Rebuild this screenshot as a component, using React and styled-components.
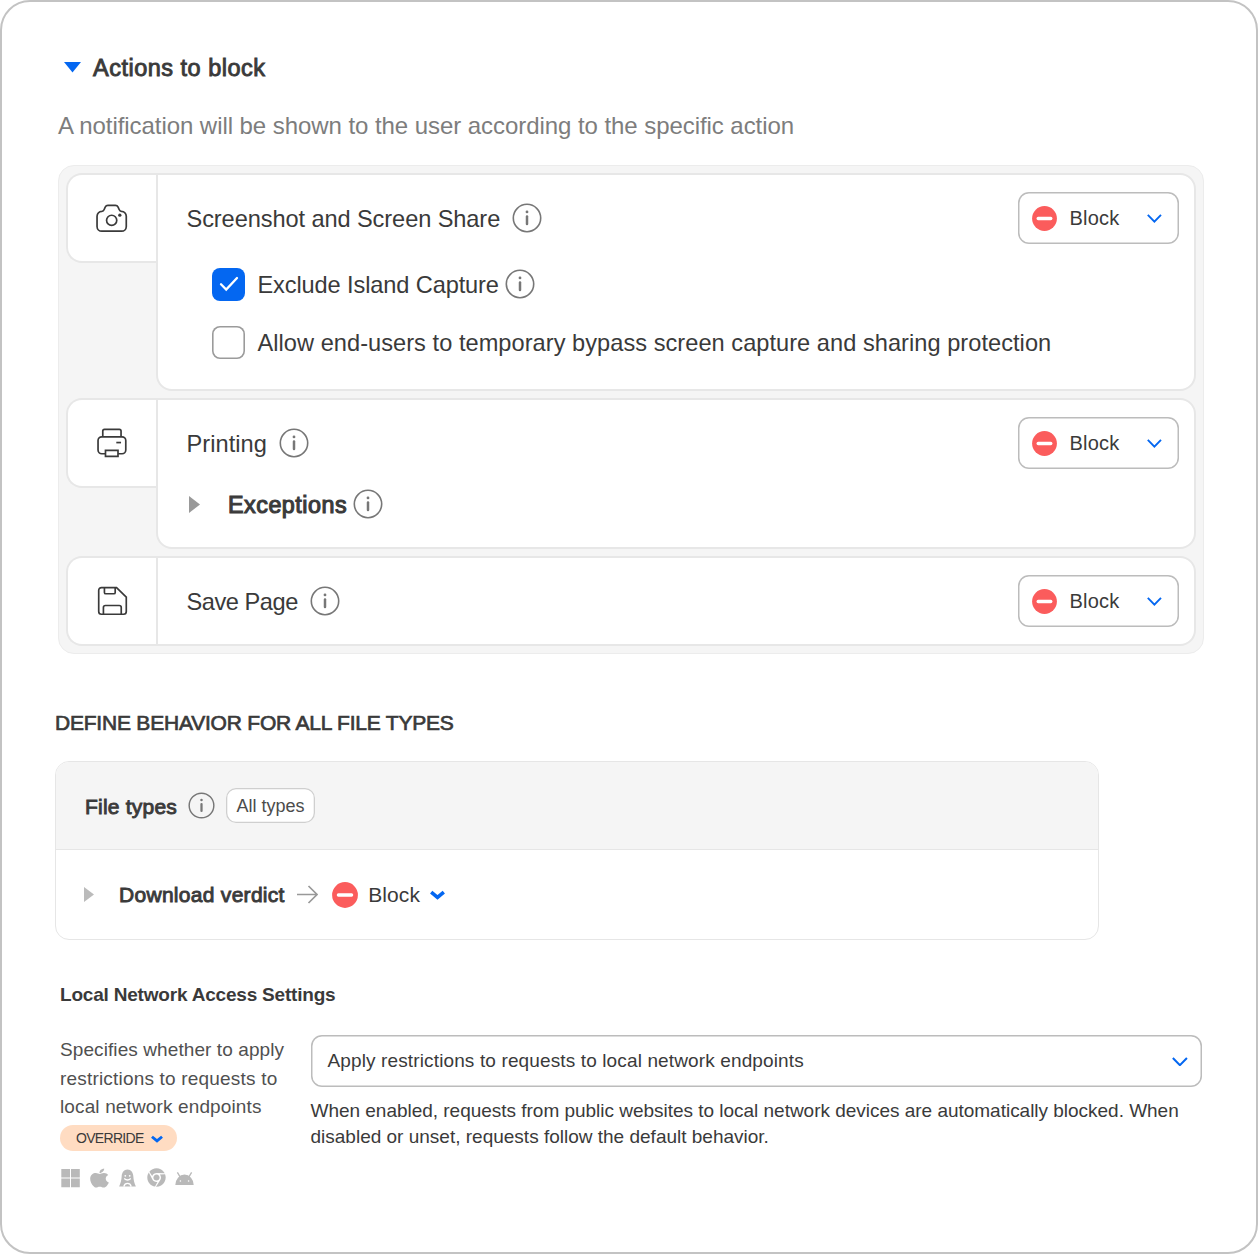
import React from 'react';
import styled, { createGlobalStyle } from 'styled-components';
import { FaApple, FaChrome } from 'react-icons/fa';

const GlobalStyle = createGlobalStyle`
  * {
    box-sizing: border-box;
  }
  body {
    margin: 0;
    background: #ffffff;
    font-family: 'Liberation Sans', Arial, sans-serif;
    color: #3a3a3a;
  }
  svg {
    display: block;
    flex-shrink: 0;
  }
`

const Card = styled.div`
  width: 1258px;
  height: 1254px;
  border: 2px solid #c3c3c3;
  border-radius: 30px;
  padding: 51px 52px 0 53px;
`
const Text = styled.span`
  font-size: ${(p) => p.$size || 23.6}px;
  letter-spacing: ${(p) => p.$track || 0}px;
  -webkit-text-stroke: ${(p) => p.$medium || 0}px currentColor;
  white-space: nowrap;
`
const TitleRow = styled.div`
  display: flex;
  align-items: center;
  height: 30px;
  padding-left: 9px;
  gap: 12px;
`
const Description = styled.div`
  height: 30px;
  line-height: 30px;
  margin-top: 28px;
  padding-left: 3px;
  color: #7d7d7d;
`
const ActionList = styled.div`
  display: flex;
  flex-direction: column;
  gap: 7px;
  width: 1146px;
  margin: 24px 0 0 3px;
  padding: 7px;
  background: #f5f5f5;
  border: 1px solid #ececec;
  border-radius: 16px;
`
const ActionRow = styled.div`
  display: flex;
  align-items: flex-start;
`
const IconCell = styled.div`
  display: flex;
  align-items: center;
  justify-content: center;
  width: 90px;
  height: 90px;
  background: #ffffff;
  border: 2px solid #e7e7e7;
  border-right: none;
  border-radius: 16px 0 0 16px;
`
const ActionBody = styled.div`
  flex: 1;
  height: ${(p) => p.$height}px;
  background: #ffffff;
  border: 2px solid #e7e7e7;
  border-radius: 0 16px 16px ${(p) => (p.$height > 90 ? 16 : 0)}px;
`
const ActionHeader = styled.div`
  display: flex;
  align-items: center;
  height: 86px;
  padding: 0 15px 0 28.5px;
`
const ActionName = styled.div`
  display: flex;
  align-items: center;
  flex: 1;
  gap: 12px;
`
const Label = styled.div`
  padding-top: 2px;
`
const Select = styled.div`
  display: flex;
  align-items: center;
  width: ${(p) => (p.$wide ? '891px' : '161px')};
  height: 52px;
  padding: ${(p) => (p.$wide ? '0 14px 0 17px' : '0 17px 0 14px')};
  border-radius: 11px;
  box-shadow: inset 0 0 0 1.5px #bcbcbc;
  background: #ffffff;
`
const SelectLabel = styled.div`
  flex: 1;
  padding-left: ${(p) => p.$indent || 0}px;
`
const CheckList = styled.div`
  display: flex;
  flex-direction: column;
  gap: 26px;
  padding: 7px 0 0 54px;
`
const CheckRow = styled.div`
  display: flex;
  align-items: center;
  height: 32px;
`
const Checkbox = styled.div`
  display: flex;
  align-items: center;
  justify-content: center;
  width: 33px;
  height: 33px;
  margin-right: 12.5px;
  border-radius: 8px;
  background: ${(p) => (p.$checked ? '#0467f1' : '#ffffff')};
  box-shadow: ${(p) => (p.$checked ? 'none' : 'inset 0 0 0 1.6px #9b9b9b')};
`
const CheckLabel = styled.div`
  display: flex;
  align-items: center;
  gap: 6px;
`
const ExceptionsRow = styled.div`
  display: flex;
  align-items: center;
  height: 30px;
  margin-top: 3px;
  padding-left: 31px;
`
const ExceptionsLabel = styled.div`
  display: flex;
  align-items: center;
  gap: 6px;
  margin-left: 28px;
`
const SectionTitle = styled.div`
  height: 28px;
  line-height: 28px;
  margin-top: 55px;
`
const Panel = styled.div`
  width: 1044px;
  height: 179px;
  margin-top: 24px;
  border: 1px solid #e6e6e6;
  border-radius: 14px;
  overflow: hidden;
`
const PanelHeader = styled.div`
  display: flex;
  align-items: center;
  height: 88px;
  padding-left: 29px;
  background: #f5f5f5;
  border-bottom: 1px solid #e6e6e6;
`
const PanelBody = styled.div`
  display: flex;
  align-items: center;
  height: 89px;
  padding-left: 28px;
`
const Tag = styled.div`
  display: flex;
  align-items: center;
  justify-content: center;
  width: 89px;
  height: 35px;
  margin-left: 11px;
  border-radius: 10px;
  background: #ffffff;
  box-shadow: inset 0 0 0 1.3px #cfcfcf;
  color: #4c4c4c;
`
const Spaced = styled.div`
  display: flex;
  align-items: center;
  margin-left: ${(p) => p.$left}px;
`
const SettingTitle = styled.div`
  height: 24px;
  line-height: 24px;
  margin: 43px 0 0 5px;
  font-weight: bold;
`
const Setting = styled.div`
  display: flex;
  margin: 28px 0 0 5px;
`
const SettingInfo = styled.div`
  width: 250.5px;
  padding-top: 1px;
  color: #505050;
  line-height: 28.6px;
`
const Line = styled.div`
  display: flex;
`
const SettingValue = styled.div`
  flex: 1;
`
const Help = styled.div`
  margin-top: 11px;
  line-height: 26px;
`
const Override = styled.div`
  display: flex;
  align-items: center;
  width: 117px;
  height: 26px;
  margin-top: 3px;
  padding: 2px 0 0 16px;
  gap: 7px;
  border-radius: 13px;
  background: #ffdcc2;
  color: #3a3a3a;
`
const Platforms = styled.div`
  display: flex;
  align-items: center;
  gap: 9.5px;
  height: 20px;
  margin-top: 17px;
  color: #b9b9b9;
`
const AppleIcon = styled(FaApple)`
  width: 19px;
  height: 22px;
`

const Info = ({ size = 30 }) => (
  <svg width={size} height={size} viewBox="0 0 30 30">
    <circle cx="15" cy="15" r="13.7" fill="none" stroke="#777" strokeWidth="1.6" />
    <circle cx="15" cy="8.9" r="1.4" fill="#777" />
    <path d="M15 13.4V21" stroke="#777" strokeWidth="2.5" strokeLinecap="round" />
  </svg>
)

const BlockIcon = ({ size = 25 }) => (
  <svg width={size} height={size} viewBox="0 0 25 25">
    <circle cx="12.5" cy="12.5" r="12.4" fill="#fb5c5c" />
    <path d="M6.2 12.5H18.8" stroke="#fff" strokeWidth="3.3" strokeLinecap="round" />
  </svg>
)

const Chevron = ({ width = 15 }) => (
  <svg width={width} height={(width * 10) / 15} viewBox="0 0 15 10">
    <path d="M0.8 1.9L7.4 8.6L14 1.9" fill="none" stroke="#0467f1" strokeWidth="1.9" />
  </svg>
)

const ThickChevron = ({ width = 15 }) => (
  <svg width={width} height={(width * 10) / 15} viewBox="0 0 15 10">
    <path d="M1.2 2.2L7.5 7.4L13.8 2.2" fill="none" stroke="#0467f1" strokeWidth="3.6" />
  </svg>
)

const TriangleDown = () => (
  <svg width="17" height="12" viewBox="0 0 17 12">
    <path d="M0 0H17L8.5 10.4Z" fill="#0467f1" />
  </svg>
)

const TriangleRight = ({ width, height, color }) => (
  <svg width={width} height={height} viewBox="0 0 11 17" preserveAspectRatio="none">
    <path d="M0 0L11 8.5L0 17Z" fill={color} />
  </svg>
)

const CheckMark = () => (
  <svg width="20" height="16" viewBox="0 0 20 16">
    <path d="M2 8.3L7.2 13.6L18 2" fill="none" stroke="#fff" strokeWidth="2.3" strokeLinecap="round" />
  </svg>
)

const Arrow = () => (
  <svg width="21" height="19" viewBox="0 0 21 19">
    <path d="M0 9.5H20M11.5 1L20 9.5L11.5 18" fill="none" stroke="#999" strokeWidth="1.7" />
  </svg>
)

const CameraIcon = () => (
  <svg width="34" height="30.6" viewBox="0 0 100 90" fill="none" stroke="#3a3a3a" strokeWidth="5">
    <path d="M6 39A15 15 0 0 1 20 24.5Q25 24 27 19L30 12Q32.5 7 38 7H60Q65.5 7 68 12L71 19Q73 24 78 24.5A15 15 0 0 1 92 39V69A14 14 0 0 1 78 83H20A14 14 0 0 1 6 69Z" />
    <circle cx="49" cy="51" r="15" />
    <circle cx="73" cy="36" r="4.8" fill="#3a3a3a" stroke="none" />
  </svg>
)

const PrinterIcon = () => (
  <svg width="32.5" height="31.8" viewBox="0 0 96 94" fill="none" stroke="#3a3a3a" strokeWidth="5">
    <path d="M20 29V12Q20 7 25 7H69Q74 7 74 12V29" />
    <path d="M28 79H17A11 11 0 0 1 6 68V40A11 11 0 0 1 17 29H77A11 11 0 0 1 88 40V68A11 11 0 0 1 77 79H65" />
    <path d="M28 69H65V87H28Z" />
    <path d="M60 46H74" />
  </svg>
)

const SaveIcon = () => (
  <svg width="31" height="29.6" viewBox="0 0 92 88" fill="none" stroke="#3a3a3a" strokeWidth="5">
    <path d="M13 5H58L87 33V76A8 8 0 0 1 79 84H13A8 8 0 0 1 5 76V13A8 8 0 0 1 13 5Z" />
    <path d="M22 5V19Q22 23 26 23H50Q54 23 54 19V5" />
    <path d="M19 84V64Q19 58 25 58H66Q72 58 72 64V84" />
  </svg>
)

const WindowsIcon = () => (
  <svg width="20" height="20" viewBox="0 0 20 20" fill="currentColor">
    <path d="M1.3 1H10V9.6H1.3ZM11 1H19.8V9.6H11ZM1.3 10.6H10V19.2H1.3ZM11 10.6H19.8V19.2H11Z" />
  </svg>
)

const LinuxIcon = () => (
  <svg width="19" height="20" viewBox="0 0 19 20">
    <path d="M9.5 1.4C5.8 1.4 3.9 4.6 3.7 8C3.5 12 2.5 15.6 1.1 18.4H17.9C16.5 15.6 15.5 12 15.3 8C15.1 4.6 13.2 1.4 9.5 1.4Z" fill="currentColor" />
    <circle cx="7.3" cy="7.8" r="0.9" fill="#fff" />
    <circle cx="11.7" cy="7.8" r="0.9" fill="#fff" />
    <path d="M6.2 10.6Q9.5 13.4 12.8 10.6" fill="none" stroke="#fff" strokeWidth="1.3" />
    <path d="M5.9 18.6Q6.3 15.4 9.5 15.4T13.1 18.6" fill="none" stroke="#fff" strokeWidth="1.4" />
  </svg>
)

const AndroidIcon = () => (
  <svg width="19" height="20" viewBox="0 0 19 20">
    <path d="M0.3 17A9.2 10.4 0 0 1 18.7 17Z" fill="currentColor" />
    <path d="M5.2 9.2L2.4 4.4M13.8 9.2L16.6 4.4" stroke="currentColor" strokeWidth="1.3" />
    <circle cx="5.4" cy="13" r="0.8" fill="#fff" />
    <circle cx="13.6" cy="13" r="0.8" fill="#fff" />
  </svg>
)

const BlockSelect = () => (
  <Select>
    <BlockIcon />
    <SelectLabel $indent={12.5}>
      <Text $size={20} $track={0.2}>Block</Text>
    </SelectLabel>
    <Chevron width={15} />
  </Select>
)

const Action = ({ icon, name, track, height, children }) => (
  <ActionRow>
    <IconCell>{icon}</IconCell>
    <ActionBody $height={height}>
      <ActionHeader>
        <ActionName>
          <Label>
            <Text $track={track}>{name}</Text>
          </Label>
          <Info />
        </ActionName>
        <BlockSelect />
      </ActionHeader>
      {children}
    </ActionBody>
  </ActionRow>
)

export default function App() {
  return (
    <>
      <GlobalStyle />
      <Card>
        <TitleRow>
          <TriangleDown />
          <Text $size={23.5} $track={0.5} $medium={0.9}>Actions to block</Text>
        </TitleRow>
        <Description>
          <Text $size={24} $track={-0.06}>A notification will be shown to the user according to the specific action</Text>
        </Description>

        <ActionList>
          <Action icon={<CameraIcon />} name="Screenshot and Screen Share" track={-0.09} height={218}>
            <CheckList>
              <CheckRow>
                <Checkbox $checked>
                  <CheckMark />
                </Checkbox>
                <CheckLabel>
                  <Label>
                    <Text $track={-0.12}>Exclude Island Capture</Text>
                  </Label>
                  <Info />
                </CheckLabel>
              </CheckRow>
              <CheckRow>
                <Checkbox />
                <CheckLabel>
                  <Label>
                    <Text $track={0.04}>Allow end-users to temporary bypass screen capture and sharing protection</Text>
                  </Label>
                </CheckLabel>
              </CheckRow>
            </CheckList>
          </Action>
          <Action icon={<PrinterIcon />} name="Printing" track={0.05} height={151}>
            <ExceptionsRow>
              <TriangleRight width={11} height={17} color="#999" />
              <ExceptionsLabel>
                <Label>
                  <Text $size={23.3} $track={0.52} $medium={1.1}>Exceptions</Text>
                </Label>
                <Info />
              </ExceptionsLabel>
            </ExceptionsRow>
          </Action>
          <Action icon={<SaveIcon />} name="Save Page" track={-0.45} height={90} />
        </ActionList>

        <SectionTitle>
          <Text $size={21} $track={-0.21} $medium={0.7}>DEFINE BEHAVIOR FOR ALL FILE TYPES</Text>
        </SectionTitle>
        <Panel>
          <PanelHeader>
            <Label>
              <Text $size={21} $track={0.22} $medium={0.9}>File types</Text>
            </Label>
            <Spaced $left={11}>
              <Info size={27} />
            </Spaced>
            <Tag>
              <Label>
                <Text $size={18}>All types</Text>
              </Label>
            </Tag>
          </PanelHeader>
          <PanelBody>
            <TriangleRight width={10} height={15} color="#bbb" />
            <Spaced $left={25}>
              <Text $size={21} $track={0.29} $medium={0.9}>Download verdict</Text>
            </Spaced>
            <Spaced $left={12}>
              <Arrow />
            </Spaced>
            <Spaced $left={14}>
              <BlockIcon size={26} />
            </Spaced>
            <Spaced $left={10.5}>
              <Text $size={21} $track={0.1}>Block</Text>
            </Spaced>
            <Spaced $left={9.5}>
              <ThickChevron />
            </Spaced>
          </PanelBody>
        </Panel>

        <SettingTitle>
          <Text $size={19} $track={-0.2}>Local Network Access Settings</Text>
        </SettingTitle>
        <Setting>
          <SettingInfo>
            <Line><Text $size={19} $track={0.09}>Specifies whether to apply</Text></Line>
            <Line><Text $size={19} $track={0.19}>restrictions to requests to</Text></Line>
            <Line><Text $size={19} $track={0.13}>local network endpoints</Text></Line>
            <Override>
              <Text $size={14} $track={-0.7}>OVERRIDE</Text>
              <ThickChevron width={12} />
            </Override>
            <Platforms>
              <WindowsIcon />
              <AppleIcon preserveAspectRatio="none" />
              <LinuxIcon />
              <FaChrome size={19} />
              <AndroidIcon />
            </Platforms>
          </SettingInfo>
          <SettingValue>
            <Select $wide>
              <SelectLabel>
                <Text $size={19} $track={0.13}>Apply restrictions to requests to local network endpoints</Text>
              </SelectLabel>
              <Chevron width={16} />
            </Select>
            <Help>
              <Line><Text $size={19} $track={-0.02}>When enabled, requests from public websites to local network devices are automatically blocked. When</Text></Line>
              <Line><Text $size={19}>disabled or unset, requests follow the default behavior.</Text></Line>
            </Help>
          </SettingValue>
        </Setting>
      </Card>
    </>
  );
}
